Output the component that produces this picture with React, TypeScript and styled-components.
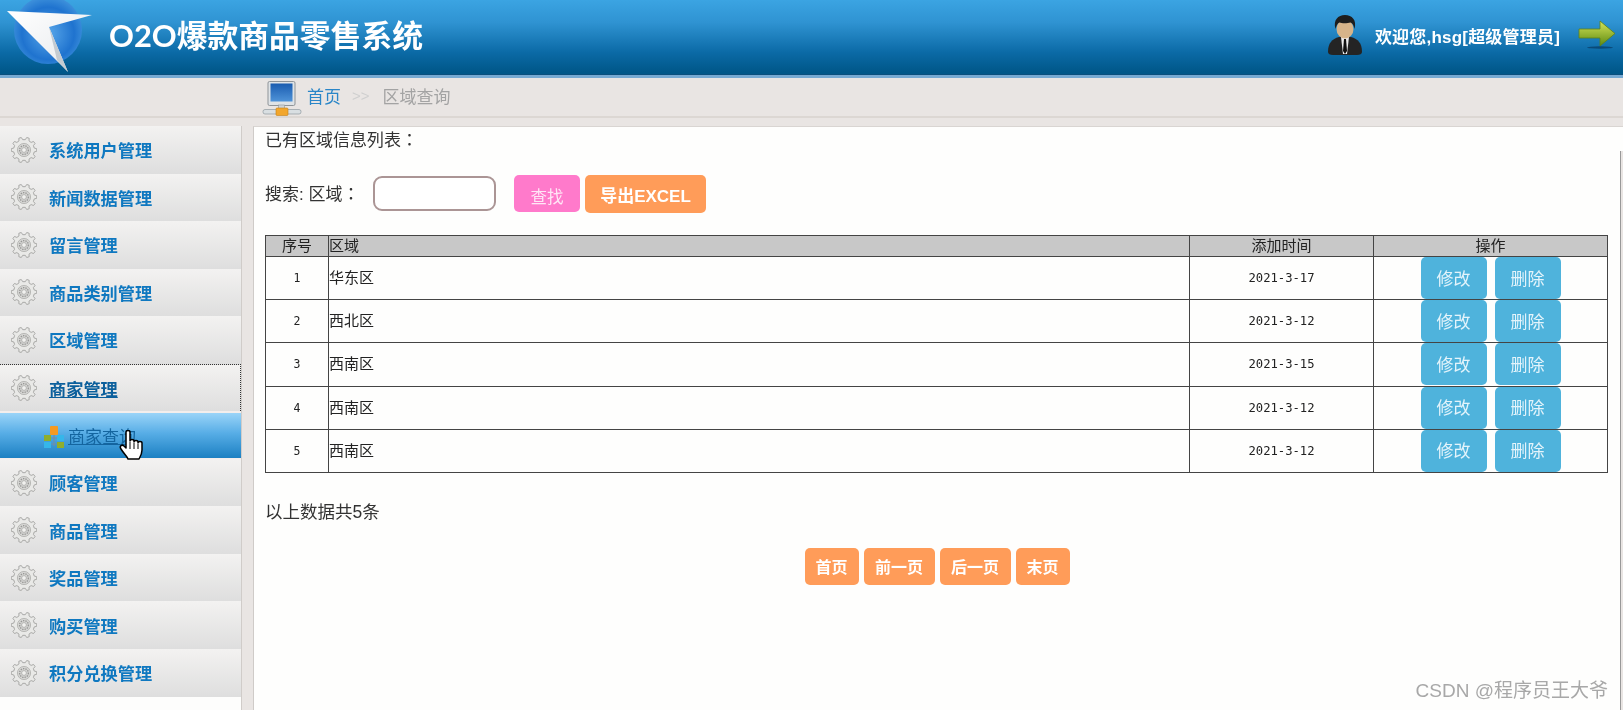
import React from 'react'
import styled, { createGlobalStyle } from 'styled-components'

const sans = `'Liberation Sans', 'Noto Sans CJK SC', sans-serif`
const sansTc = `'Liberation Sans', 'Noto Sans CJK TC', sans-serif`

const GlobalStyle = createGlobalStyle`
  html, body {
    margin: 0;
    padding: 0;
    height: 100%;
    overflow: hidden;
    background: #e9e5e3;
    font-family: ${sans};
  }
  * {
    box-sizing: border-box;
  }
`

const Page = styled.div`
  position: relative;
  width: 1623px;
  height: 710px;
  overflow: hidden;
  display: flex;
  flex-direction: column;
  background: #e9e5e3;
  filter: blur(0.35px);
`

const Header = styled.header`
  height: 78px;
  flex: none;
  display: flex;
  align-items: center;
  background: linear-gradient(#3ba4e2 0%, #2f93d2 30%, #0b6aa6 70%, #005789 96%);
  border-bottom: 3px solid #76a9d2;
  box-shadow: inset 0 -1px 0 #0a4f7d;
  color: #fff;
`

const LogoWrap = styled.div`
  width: 109px;
  height: 75px;
  flex: none;
`

const SystemName = styled.h1`
  margin: 0 0 4px;
  font-size: 30.8px;
  line-height: 40px;
  font-weight: 700;
  font-family: 'Lato', 'Noto Sans CJK SC', sans-serif;
`

const UserBox = styled.div`
  margin-left: auto;
  display: flex;
  align-items: center;
  padding: 0 7px 5px 0;
`

const Welcome = styled.span`
  margin: 0 18px 0 12px;
  font-size: 17px;
  font-weight: 700;
  letter-spacing: 0.2px;
`

const CrumbBar = styled.nav`
  height: 40px;
  flex: none;
  display: flex;
  align-items: center;
  padding-left: 262px;
  border-bottom: 2px solid #dcd7d3;
  font-size: 17px;
`

const CrumbIcon = styled.span`
  display: flex;
  margin-top: 2px;
`

const CrumbLink = styled.a`
  margin: 0 0 3px 5px;
  color: #2a86c8;
`

const CrumbSep = styled.span`
  margin: 0 13px 3px 11px;
  color: #cfcfcf;
  font-size: 15px;
`

const CrumbText = styled.span`
  margin-bottom: 3px;
  color: #a3a3a3;
`

const Body = styled.div`
  flex: 1;
  min-height: 0;
  display: flex;
  margin-top: 8px;
  gap: 11px;
`

const Sidebar = styled.aside`
  width: 242px;
  flex: none;
  display: flex;
  flex-direction: column;
  background: #fdfdfc;
  border-right: 1px solid #d0ccc9;
`

const SideItem = styled.div<{ $active?: boolean }>`
  height: 47.55px;
  flex: none;
  display: flex;
  align-items: center;
  padding-left: 11px;
  gap: 12px;
  background: linear-gradient(#f3f2f1, #dedede);
  ${({ $active }) =>
    $active &&
    `border-top: 1px dotted #333;
     border-right: 1px dotted #333;`}
`

const SideLabel = styled.a<{ $active?: boolean }>`
  color: ${({ $active }) => ($active ? '#0b5f9c' : '#0f78c0')};
  font-size: 17.2px;
  font-weight: 700;
  text-decoration: ${({ $active }) => ($active ? 'underline' : 'none')};
`

const SubItem = styled.div`
  position: relative;
  height: 47.55px;
  flex: none;
  display: flex;
  align-items: center;
  padding-left: 44px;
  border-top: 2px solid #f3eeec;
  border-bottom: 1px solid #f3eeec;
  background: linear-gradient(#9ad4f8, #57ade6 45%, #1c80c2);
`

const TreeWrap = styled.span`
  display: flex;
  margin-top: 3px;
`

const SubLabel = styled.a`
  margin-left: 4px;
  color: #14659f;
  font-size: 17px;
  text-decoration: underline;
`

const HandCursor = styled.svg`
  position: absolute;
  left: 119px;
  top: 17px;
`

const Main = styled.main`
  position: relative;
  flex: 1;
  min-width: 0;
  background: #fefefd;
  border-top: 1px solid #d9d5d2;
  border-left: 1px solid #cfcbc8;
  padding: 2px 15px 0 11px;
  color: #333;
  font-size: 17px;
`

const EdgeLine = styled.div`
  position: absolute;
  right: 0;
  top: 24px;
  bottom: 0;
  width: 3px;
  border-left: 1px solid #999;
  background: #e9e5e3;
`

const ListTitle = styled.div`
  line-height: 24px;
  font-family: ${sansTc};
`

const SearchRow = styled.div`
  display: flex;
  align-items: center;
  height: 40px;
  margin-top: 20px;
`

const SearchLabel = styled.span`
  width: 108px;
  margin-bottom: 2px;
  font-family: ${sansTc};
`

const SearchInput = styled.input`
  width: 123px;
  height: 35px;
  margin-right: 18px;
  border: 2px solid #ab9595;
  border-radius: 9px;
  background: #fff;
`

const Button = styled.button<{ $bg: string; $bold?: boolean }>`
  border: 0;
  padding: 0;
  margin: 0;
  border-radius: 5px;
  color: #fff;
  font-family: ${sans};
  background: ${({ $bg }) => $bg};
  font-weight: ${({ $bold }) => ($bold ? 700 : 400)};
`

const FindButton = styled(Button)`
  width: 66px;
  height: 37px;
  margin: 1px 5px 0 0;
  padding-top: 4px;
  font-size: 16.5px;
  color: #ffe6f6;
`

const ExportButton = styled(Button)`
  width: 121px;
  height: 38px;
  margin-top: 2px;
  font-size: 17px;
`

const Table = styled.table`
  width: 1342px;
  margin-top: 22px;
  table-layout: fixed;
  border-collapse: collapse;
  color: #222;
  font-size: 15px;
`

const HeadRow = styled.tr`
  height: 21px;
  background: #c8c8c8;
`

const HeadCell = styled.th<{ $left?: boolean }>`
  padding: 0;
  border: 1px solid #444;
  font-weight: 400;
  line-height: 20px;
  text-align: ${({ $left }) => ($left ? 'left' : 'center')};
`

const Row = styled.tr`
  height: 43.2px;
`

const Cell = styled.td`
  padding: 0;
  border: 1px solid #444;
  text-align: center;
`

const IndexCell = styled(Cell)`
  font-family: 'DejaVu Sans Mono', monospace;
  font-size: 11.5px;
`

const AreaCell = styled(Cell)`
  padding-bottom: 3px;
  text-align: left;
`

const DateCell = styled(Cell)`
  font-family: 'DejaVu Sans Mono', monospace;
  font-size: 12.2px;
`

const Actions = styled.div`
  display: flex;
  justify-content: center;
  gap: 8px;
  height: 42px;
`

const RowButton = styled(Button)`
  width: 66px;
  height: 42px;
  padding-bottom: 2px;
  font-size: 17px;
  color: #e4f4fb;
`

const Total = styled.div`
  margin-top: 27px;
  line-height: 24px;
  font-size: 17.5px;
  color: #333;
`

const Pager = styled.div`
  display: flex;
  justify-content: center;
  gap: 5px;
  margin-top: 24px;
  padding-left: 1px;
`

const PageButton = styled(Button)<{ $wide?: boolean }>`
  width: ${({ $wide }) => ($wide ? '71px' : '54px')};
  height: 37px;
  font-size: 16px;
`

const Watermark = styled.div`
  position: absolute;
  right: 15px;
  bottom: 7px;
  color: #a8a8a8;
  font-size: 19px;
  line-height: 24px;
`

const Logo = () => (
  <svg width="100" height="75" viewBox="0 0 100 75">
    <defs>
      <radialGradient id="globe" cx="50%" cy="55%" r="55%">
        <stop offset="0%" stopColor="#5aa8ea" />
        <stop offset="70%" stopColor="#1f73cf" />
        <stop offset="100%" stopColor="#3f92dc" />
      </radialGradient>
      <linearGradient id="wing" x1="0" y1="0" x2="1" y2="1">
        <stop offset="0%" stopColor="#ffffff" />
        <stop offset="65%" stopColor="#eef0f2" />
        <stop offset="100%" stopColor="#b9c1c8" />
      </linearGradient>
    </defs>
    <circle cx="48" cy="30" r="34" fill="url(#globe)" />
    <polygon points="7,11 92,15 49,27 68,72" fill="url(#wing)" />
    <polygon points="49,27 68,72 57,60" fill="#c4cbd1" />
  </svg>
)

const UserIcon = () => (
  <svg width="36" height="42" viewBox="0 0 36 42">
    <path d="M1 38c0-9 4-13 11-15h12c7 2 11 6 11 15 0 2-2 3-5 3H6c-3 0-5-1-5-3z" fill="#242424" />
    <path d="M14 23h8l-2 17h-4z" fill="#eee" />
    <path d="M17 25h2l1 12-2 3-2-3z" fill="#111" />
    <ellipse cx="18" cy="15" rx="8.5" ry="9.5" fill="#d6b48a" />
    <path d="M8.5 15C6 6 11 1 18 1s12 5 9.500 14c-1-4-2-6-4-6.500-3 1-9 1-11 0-2 .5-3 3-4 6.500z" fill="#1e1e1e" />
  </svg>
)

const ArrowIcon = () => (
  <svg width="38" height="30" viewBox="0 0 38 30">
    <defs>
      <linearGradient id="arrow" x1="0" y1="0" x2="0" y2="1">
        <stop offset="0%" stopColor="#d6e45a" />
        <stop offset="100%" stopColor="#5c8a10" />
      </linearGradient>
    </defs>
    <ellipse cx="22" cy="27.5" rx="13" ry="1.2" fill="#0a4a78" />
    <path d="M1 9h21V1l15 12.500L22 26v-8H1z" fill="url(#arrow)" stroke="#5f8216" strokeWidth="0.8" />
  </svg>
)

const ComputerIcon = () => (
  <svg width="40" height="35" viewBox="0 0 40 35">
    <defs>
      <linearGradient id="screen" x1="0" y1="0" x2="0" y2="1">
        <stop offset="0%" stopColor="#1a5cb0" />
        <stop offset="100%" stopColor="#4f93d8" />
      </linearGradient>
    </defs>
    <rect x="6" y="0.5" width="27" height="24" rx="1.5" fill="#dfe3e6" stroke="#8f9498" />
    <rect x="8.5" y="2.5" width="22" height="18" fill="url(#screen)" />
    <rect x="16.5" y="24" width="6" height="4" fill="#cfd4d8" stroke="#8f9498" strokeWidth="0.6" />
    <rect x="1" y="28.5" width="38" height="4.5" rx="2" fill="#d9dfe2" stroke="#8f9a9f" strokeWidth="0.7" />
    <rect x="14" y="27" width="12" height="7.5" rx="1" fill="#f2a62c" stroke="#c47f16" strokeWidth="0.6" />
  </svg>
)

// builds a cog outline with rounded-ish teeth around the centre of a 26px box
const gearPath = (() => {
  const teeth = 10
  const points: string[] = []
  for (let i = 0; i < teeth; i++) {
    const step = (Math.PI * 2) / teeth
    const a = i * step
    const corners: [number, number][] = [
      [a - step * 0.3, 10.4],
      [a - step * 0.16, 12.8],
      [a + step * 0.16, 12.8],
      [a + step * 0.3, 10.4],
    ]
    corners.forEach(([angle, r]) => {
      points.push(`${(13 + r * Math.cos(angle)).toFixed(2)},${(13 + r * Math.sin(angle)).toFixed(2)}`)
    })
  }
  return points.join(' ')
})()

const Gear = () => (
  <svg width="26" height="26" viewBox="0 0 26 26">
    <polygon points={gearPath} fill="#e9e9e7" stroke="#a9a9a7" strokeWidth="1" strokeLinejoin="round" />
    <circle cx="13" cy="13" r="6.6" fill="#d6d6d4" stroke="#aeaeac" strokeWidth="0.8" />
    <circle cx="13" cy="13" r="4.4" fill="none" stroke="#989896" strokeWidth="1.4" strokeDasharray="1.4 1" />
    <circle cx="13" cy="13" r="2.4" fill="#f1f1ef" stroke="#a0a09e" strokeWidth="0.7" />
  </svg>
)

const TreeIcon = () => (
  <svg width="20" height="22" viewBox="0 0 20 22">
    <path d="M10 6v14M4 12h12M4 18h12" stroke="#6f8fa8" strokeWidth="1.2" />
    <rect x="6" y="0" width="8" height="9" rx="1" fill="#f59a23" />
    <rect x="0" y="9" width="7" height="6" fill="#8fae2e" />
    <rect x="13" y="9" width="7" height="6" fill="#35b6ea" />
    <rect x="0" y="16" width="7" height="6" fill="#35b6ea" />
    <rect x="13" y="16" width="7" height="6" fill="#8fae2e" />
  </svg>
)

const Hand = () => (
  <HandCursor width="24" height="30" viewBox="0 0 24 30">
    <path
      d="M7 2c0-2 4-2 4 0v9c0-2 4-2 4 0v1c0-2 4-2 4 0v1c0-2 4-2 4 0v7c0 4-2 7-3 9H9c-1-3-4-5-7-10-2-3 1-5 3-3l2 2z"
      fill="#fff"
      stroke="#000"
      strokeWidth="1.5"
      strokeLinejoin="round"
    />
    <path d="M11 12v7M15 13v6M19 14v5" stroke="#000" strokeWidth="1" />
  </HandCursor>
)

const menuTop = ['系统用户管理', '新闻数据管理', '留言管理', '商品类别管理', '区域管理']
const menuBottom = ['顾客管理', '商品管理', '奖品管理', '购买管理', '积分兑换管理']

const rows = [
  { id: 1, area: '华东区', date: '2021-3-17' },
  { id: 2, area: '西北区', date: '2021-3-12' },
  { id: 3, area: '西南区', date: '2021-3-15' },
  { id: 4, area: '西南区', date: '2021-3-12' },
  { id: 5, area: '西南区', date: '2021-3-12' },
]

const App = () => (
  <Page>
    <GlobalStyle />
    <Header>
      <LogoWrap>
        <Logo />
      </LogoWrap>
      <SystemName>O2O爆款商品零售系统</SystemName>
      <UserBox>
        <UserIcon />
        <Welcome>欢迎您,hsg[超级管理员]</Welcome>
        <ArrowIcon />
      </UserBox>
    </Header>
    <CrumbBar>
      <CrumbIcon>
        <ComputerIcon />
      </CrumbIcon>
      <CrumbLink>首页</CrumbLink>
      <CrumbSep>&gt;&gt;</CrumbSep>
      <CrumbText>区域查询</CrumbText>
    </CrumbBar>
    <Body>
      <Sidebar>
        {menuTop.map((name) => (
          <SideItem key={name}>
            <Gear />
            <SideLabel>{name}</SideLabel>
          </SideItem>
        ))}
        <SideItem $active>
          <Gear />
          <SideLabel $active>商家管理</SideLabel>
        </SideItem>
        <SubItem>
          <TreeWrap>
            <TreeIcon />
          </TreeWrap>
          <SubLabel>商家查询</SubLabel>
          <Hand />
        </SubItem>
        {menuBottom.map((name) => (
          <SideItem key={name}>
            <Gear />
            <SideLabel>{name}</SideLabel>
          </SideItem>
        ))}
      </Sidebar>
      <Main>
        <EdgeLine />
        <ListTitle>已有区域信息列表：</ListTitle>
        <SearchRow>
          <SearchLabel>搜索: 区域：</SearchLabel>
          <SearchInput />
          <FindButton $bg="#ff7acb">查找</FindButton>
          <ExportButton $bg="#ff9c59" $bold>
            导出EXCEL
          </ExportButton>
        </SearchRow>
        <Table>
          <colgroup>
            <col width="63" />
            <col width="861" />
            <col width="184" />
            <col width="234" />
          </colgroup>
          <thead>
            <HeadRow>
              <HeadCell>序号</HeadCell>
              <HeadCell $left>区域</HeadCell>
              <HeadCell>添加时间</HeadCell>
              <HeadCell>操作</HeadCell>
            </HeadRow>
          </thead>
          <tbody>
            {rows.map((row) => (
              <Row key={row.id}>
                <IndexCell>{row.id}</IndexCell>
                <AreaCell>{row.area}</AreaCell>
                <DateCell>{row.date}</DateCell>
                <Cell>
                  <Actions>
                    <RowButton $bg="#4fb3dc">修改</RowButton>
                    <RowButton $bg="#4fb3dc">删除</RowButton>
                  </Actions>
                </Cell>
              </Row>
            ))}
          </tbody>
        </Table>
        <Total>以上数据共5条</Total>
        <Pager>
          <PageButton $bg="#ff9c59" $bold>首页</PageButton>
          <PageButton $bg="#ff9c59" $bold $wide>前一页</PageButton>
          <PageButton $bg="#ff9c59" $bold $wide>后一页</PageButton>
          <PageButton $bg="#ff9c59" $bold>末页</PageButton>
        </Pager>
        <Watermark>CSDN @程序员王大爷</Watermark>
      </Main>
    </Body>
  </Page>
)

export default App
